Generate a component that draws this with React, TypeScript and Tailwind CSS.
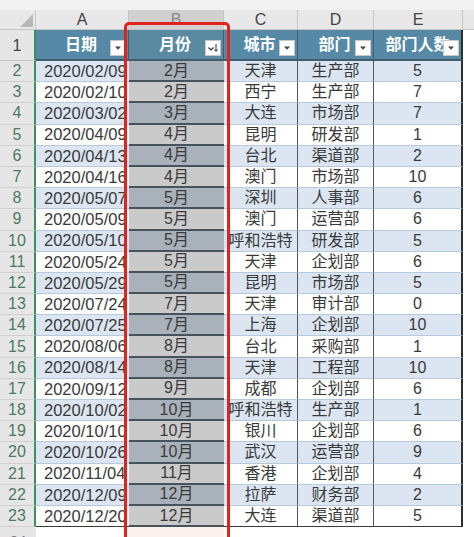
import React from "react";

const rows: [string, string, string, string, string][] = [
  ["2020/02/09", "2月", "天津", "生产部", "5"],
  ["2020/02/10", "2月", "西宁", "生产部", "7"],
  ["2020/03/02", "3月", "大连", "市场部", "7"],
  ["2020/04/09", "4月", "昆明", "研发部", "1"],
  ["2020/04/13", "4月", "台北", "渠道部", "2"],
  ["2020/04/16", "4月", "澳门", "市场部", "10"],
  ["2020/05/07", "5月", "深圳", "人事部", "6"],
  ["2020/05/09", "5月", "澳门", "运营部", "6"],
  ["2020/05/10", "5月", "呼和浩特", "研发部", "5"],
  ["2020/05/24", "5月", "天津", "企划部", "6"],
  ["2020/05/29", "5月", "昆明", "市场部", "5"],
  ["2020/07/24", "7月", "天津", "审计部", "0"],
  ["2020/07/25", "7月", "上海", "企划部", "10"],
  ["2020/08/06", "8月", "台北", "采购部", "1"],
  ["2020/08/14", "8月", "天津", "工程部", "10"],
  ["2020/09/12", "9月", "成都", "企划部", "6"],
  ["2020/10/02", "10月", "呼和浩特", "生产部", "1"],
  ["2020/10/10", "10月", "银川", "企划部", "6"],
  ["2020/10/26", "10月", "武汉", "运营部", "9"],
  ["2020/11/04", "11月", "香港", "企划部", "4"],
  ["2020/12/09", "12月", "拉萨", "财务部", "2"],
  ["2020/12/20", "12月", "大连", "渠道部", "5"],
];

function FilterButton({ sorted }: { sorted?: boolean }) {
  return (
    <div className="absolute right-[2px] bottom-[3px] w-[16px] h-[16px] bg-white border border-[#c8c8c8] flex items-center justify-center">
      {sorted ? (
        <svg width="12" height="12" viewBox="0 0 12 12">
          <path d="M1.5 5.5 L4 8 L6.5 5.5" fill="none" stroke="#333" strokeWidth="1.2" />
          <path d="M9 2 V9 M7.5 7.5 L9 9.5 L10.5 7.5" fill="none" stroke="#333" strokeWidth="1" />
        </svg>
      ) : (
        <svg width="8" height="6" viewBox="0 0 8 6">
          <path d="M1 1.5 L7 1.5 L4 4.8 Z" fill="#444" />
        </svg>
      )}
    </div>
  );
}

function HeadCell({ w, label, sorted, extra }: { w: string; label: string; sorted?: boolean; extra?: string }) {
  return (
    <div className={`relative ${w} h-full flex items-center justify-center overflow-hidden border-r border-b-2 border-[#3f5d6c] ${extra ?? "bg-[#5589a5]"}`}>
      <span className="text-white font-bold text-[16px] whitespace-nowrap pr-[2px]">{label}</span>
      <FilterButton sorted={sorted} />
    </div>
  );
}

export default function App() {
  return (
    <div
      className="relative w-[474px] h-[537px] overflow-hidden bg-white text-[#3a3a3a]"
      style={{ fontFamily: '"Liberation Sans", "Noto Sans CJK SC", sans-serif' }}
    >
      <div className="h-[10px] bg-[#f2f2f2]" />

      {/* column letters */}
      <div className="flex h-[20px] bg-[#e8e8e8] border-b border-[#c4c4c4] text-[16px] text-[#444]">
        <div className="w-[36px] h-full relative border-r border-[#c8c8c8]">
          <svg className="absolute right-[2px] bottom-[2px]" width="13" height="13" viewBox="0 0 13 13">
            <polygon points="13,0 13,13 0,13" fill="#b9b9b9" />
          </svg>
        </div>
        <div className="w-[93px] flex items-center justify-center border-r border-[#c8c8c8]">A</div>
        <div className="w-[95px] flex items-center justify-center bg-[#d0d0d0] text-[#888] border-r border-[#c8c8c8]">B</div>
        <div className="w-[74px] flex items-center justify-center border-r border-[#c8c8c8]">C</div>
        <div className="w-[76px] flex items-center justify-center border-r border-[#c8c8c8]">D</div>
        <div className="w-[89px] flex items-center justify-center border-r border-[#c8c8c8]">E</div>
        <div className="flex-1" />
      </div>

      {/* header row */}
      <div className="flex h-[31px]">
        <div className="w-[36px] h-full bg-[#e6e6e6] border-r-2 border-[#3f8f63] border-b border-b-[#c8c8c8] flex items-end justify-center pb-[2px] text-[16px] text-[#444]">
          1
        </div>
        <HeadCell w="w-[93px]" label="日期" />
        <HeadCell w="w-[95px]" label="月份" sorted extra="bg-[#5a8aa2]" />
        <HeadCell w="w-[74px]" label="城市" />
        <HeadCell w="w-[76px]" label="部门" />
        <div className="relative w-[89px] h-full bg-[#5589a5] border-r-2 border-[#2e2e2e] border-b-2 border-b-[#3f5d6c] flex items-center justify-center overflow-hidden">
          <span className="text-white font-bold text-[16px] whitespace-nowrap">部门人数</span>
          <FilterButton />
        </div>
        <div className="flex-1" />
      </div>

      {/* data rows */}
      {rows.map((r, i) => {
        const blue = i % 2 === 0;
        const last = i === rows.length - 1;
        return (
          <div key={i} className="flex h-[21.2px] text-[16px] leading-none">
            <div className="w-[36px] h-full bg-[#e6e6e6] border-r-2 border-[#3f8f63] border-b border-b-[#cfcfcf] flex items-center justify-center text-[16px] text-[#4d7a62]">
              {i + 2}
            </div>
            <div
              className={`w-[93px] h-full flex items-center pl-[8px] text-[16.5px] overflow-hidden whitespace-nowrap border-b ${
                last ? "border-[#3a3a3a]" : "border-[#b7cadd]"
              } ${blue ? "bg-[#dce6f2]" : "bg-white"}`}
            >
              {r[0]}
            </div>
            <div
              className={`w-[95px] h-full flex items-center justify-center border-b-2 border-[#46525c] ${
                blue ? "bg-[#a9b2ba]" : "bg-[#cacaca]"
              }`}
            >
              {r[1]}
            </div>
            <div
              className={`w-[74px] h-full flex items-center justify-center whitespace-nowrap border-r border-[#555] border-b ${
                last ? "border-b-[#3a3a3a]" : "border-b-[#b7cadd]"
              } ${blue ? "bg-[#dce6f2]" : "bg-white"}`}
            >
              {r[2]}
            </div>
            <div
              className={`w-[76px] h-full flex items-center justify-center border-r border-[#555] border-b ${
                last ? "border-b-[#3a3a3a]" : "border-b-[#b7cadd]"
              } ${blue ? "bg-[#dce6f2]" : "bg-white"}`}
            >
              {r[3]}
            </div>
            <div
              className={`w-[89px] h-full flex items-center justify-center border-r-2 border-[#2e2e2e] border-b ${
                last ? "border-b-[#3a3a3a]" : "border-b-[#b7cadd]"
              } ${blue ? "bg-[#dce6f2]" : "bg-white"}`}
            >
              {r[4]}
            </div>
            <div className="flex-1" />
          </div>
        );
      })}

      {/* row 24, partly visible */}
      <div className="flex h-[20px]">
        <div className="w-[36px] h-full bg-[#e6e6e6] flex items-start justify-center pt-[3px] text-[15px] text-[#777]">
          24
        </div>
        <div className="w-[93px]" />
        <div className="w-[95px] bg-[#fdf1ee]" />
      </div>

      {/* red highlight box */}
      <div className="absolute left-[124px] top-[22px] w-[106px] h-[540px] border-[3px] border-[#e0231c] rounded-[5px]" />
    </div>
  );
}
